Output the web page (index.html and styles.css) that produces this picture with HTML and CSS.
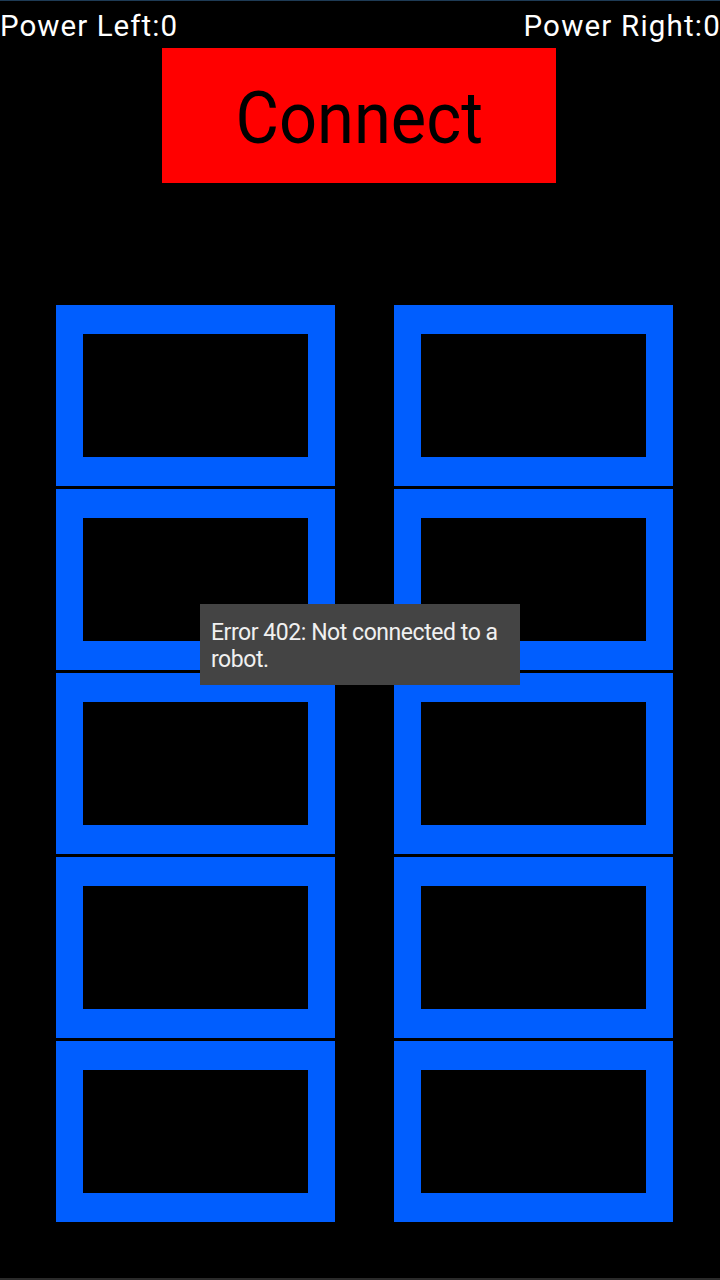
FILE: index.html
```html
<!DOCTYPE html>
<html>
<head>
<meta charset="utf-8">
<link rel="stylesheet" href="styles.css">
</head>
<body>
<div class="screen">
  <div class="topline"></div>
  <div class="header">
    <span class="power">Power Left:0</span>
    <span class="power">Power Right:0</span>
  </div>
  <div class="connect"><span class="connect-label">Connect</span></div>
  <div class="grid">
    <div class="pad"></div><div class="pad"></div>
    <div class="pad"></div><div class="pad"></div>
    <div class="pad"></div><div class="pad"></div>
    <div class="pad"></div><div class="pad"></div>
    <div class="pad"></div><div class="pad"></div>
  </div>
  <div class="toast">Error 402: Not connected to a robot.</div>
  <div class="bottomline"></div>
</div>
</body>
</html>
```

FILE: styles.css
```css
html, body {
  margin: 0;
  padding: 0;
  background: #000;
}
.screen {
  position: relative;
  width: 720px;
  height: 1280px;
  background: #000;
  font-family: Roboto, "Noto Sans", sans-serif;
  overflow: hidden;
  display: flex;
  flex-direction: column;
}
.topline {
  height: 1px;
  background: #1e3b55;
}
.header {
  height: 47px;
  display: flex;
  justify-content: space-between;
  align-items: flex-start;
  padding-top: 8px;
  box-sizing: border-box;
}
.power {
  color: #fff;
  font-size: 29.5px;
  line-height: 35px;
  letter-spacing: 1.05px;
}
.power:last-child {
  letter-spacing: 1.2px;
  margin-right: -1px;
}
.connect {
  margin-left: 162px;
  width: 394px;
  height: 135px;
  background: #ff0000;
  color: #000;
  font-size: 73px;
  display: flex;
  align-items: center;
  justify-content: center;
  line-height: 1;
  padding-top: 6px;
  box-sizing: border-box;
}
.connect-label {
  display: inline-block;
  transform: scaleX(0.915);
}
.grid {
  margin-top: 122px;
  margin-left: 56px;
  display: grid;
  grid-template-columns: 279px 279px;
  grid-auto-rows: 181px;
  column-gap: 59px;
  row-gap: 3px;
}
.pad {
  border-style: solid;
  border-color: #005eff;
  border-width: 29px 27px;
  background: #000;
}
.toast {
  position: absolute;
  left: 200px;
  top: 604px;
  width: 320px;
  height: 81px;
  box-sizing: border-box;
  padding: 15px 10px 0 11px;
  background: #444444;
  color: #f0f0f0;
  font-size: 23px;
  line-height: 27px;
  letter-spacing: -0.45px;
}
.bottomline {
  position: absolute;
  left: 0;
  right: 0;
  bottom: 0;
  height: 2px;
  background: #2a2a2a;
}
```
